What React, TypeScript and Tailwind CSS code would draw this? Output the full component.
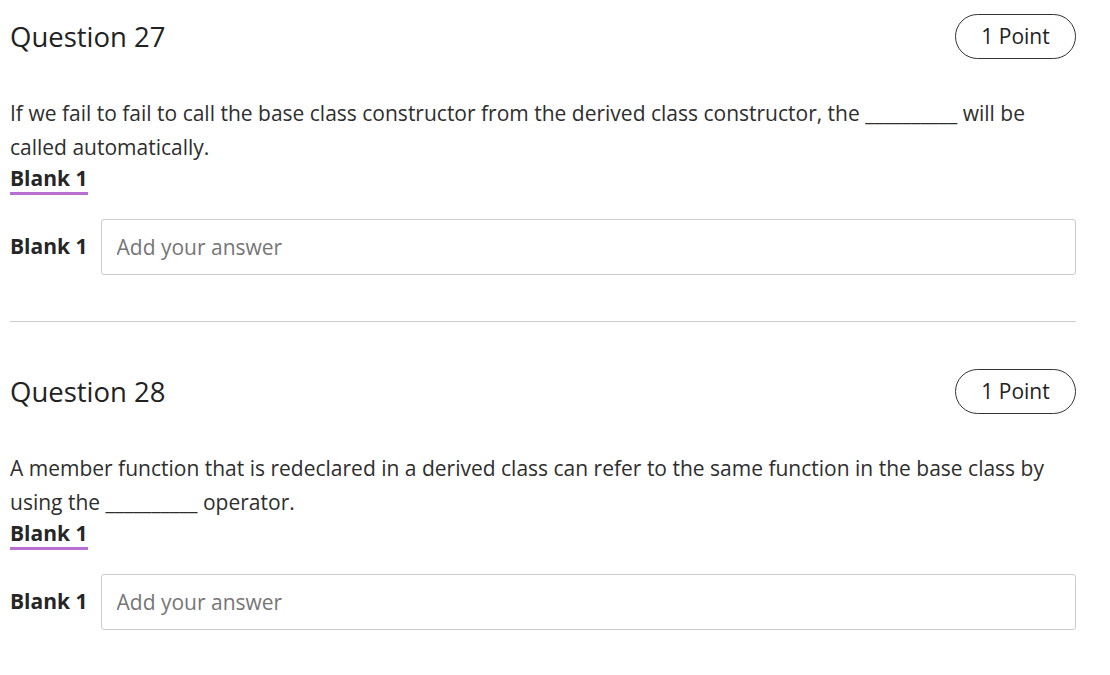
const questions = [
  {
    title: 'Question 27',
    before: 'If we fail to fail to call the base class constructor from the derived class constructor, the ',
    after: ' will be called automatically.',
  },
  {
    title: 'Question 28',
    before: 'A member function that is redeclared in a derived class can refer to the same function in the base class by using the ',
    after: ' operator.',
  },
]

function Question({ title, before, after }: { title: string; before: string; after: string }) {
  return (
    <section>
      <div className="flex items-center justify-between">
        <h2 className="text-[27.5px] leading-[36px] text-[#222]">{title}</h2>
        <div className="flex h-[45px] w-[121px] items-center justify-center rounded-full border border-[#333] text-[21px] text-[#222]">
          1 Point
        </div>
      </div>
      <p className="mt-[37px] text-[21px] leading-[34px] text-[#2e2e2e]">
        {before}__________{after}
      </p>
      <div>
        <span className="inline-block border-b-[3px] border-[#b86fd1] text-[21px] font-bold leading-[28px] text-[#262626]">
          Blank 1
        </span>
      </div>
      <div className="mt-[24px] flex items-center gap-[13px]">
        <label className="text-[21px] font-bold text-[#262626]">Blank 1</label>
        <input
          placeholder="Add your answer"
          className="h-[56px] flex-1 rounded-[3px] border border-[#cccccc] px-[15px] text-[21px] text-[#333] outline-none placeholder:text-[#767676]"
        />
      </div>
    </section>
  )
}

export default function App() {
  return (
    <div className="min-h-screen bg-white pl-[10px] pr-[34px] pt-[14px] font-['Open_Sans',sans-serif]">
      <Question {...questions[0]} />
      <hr className="mb-[47px] mt-[46px] border-t border-[#cccccc]" />
      <Question {...questions[1]} />
    </div>
  )
}
